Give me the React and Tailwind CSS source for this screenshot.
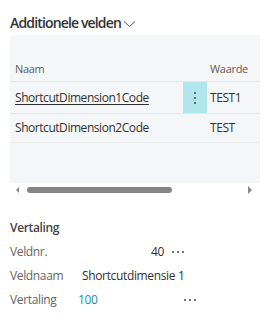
import { ChevronDown } from 'lucide-react';

const FONT = { fontFamily: '"Segoe UI", "Open Sans", "Noto Sans", sans-serif' };

function Dots({ className = '' }) {
  return (
    <span className={`flex items-center gap-[3px] ${className}`}>
      <span className="w-[2px] h-[2px] rounded-full bg-[#444]" />
      <span className="w-[2px] h-[2px] rounded-full bg-[#444]" />
      <span className="w-[2px] h-[2px] rounded-full bg-[#444]" />
    </span>
  );
}

export default function App() {
  return (
    <div className="w-[271px] h-[320px] bg-white text-[#323130] overflow-hidden" style={FONT}>
      {/* Title */}
      <div className="flex items-center pl-[10px] pt-[9px] h-[35px]">
        <span className="text-[14px] font-semibold tracking-[-0.85px] text-[#333]">Additionele velden</span>
        <svg className="w-[13px] h-[8px] ml-[2px] mt-[3px]" viewBox="0 0 13 8" fill="none">
          <path d="M1 1.5 L6.5 6.5 L12 1.5" stroke="#555" strokeWidth="1" />
        </svg>
      </div>

      {/* Table panel */}
      <div className="ml-[10px] w-[250px] bg-[#f5f6f7]">
        <div className="h-[26px]" />
        <div className="flex items-end h-[16px] text-[11px] tracking-[-0.3px] text-[#605e5c]">
          <span className="pl-[5px] w-[200px]">Naam</span>
          <span>Waarde</span>
        </div>
        <div className="h-[1px] bg-[#e6e6e6] mt-[4px]" />
        <div className="flex items-center h-[31px] text-[12px] tracking-[-0.45px]">
          <span className="pl-[5px] w-[173px] underline underline-offset-2">ShortcutDimension1Code</span>
          <span className="w-[24px] h-full bg-[#b0e6ec] flex items-center justify-center">
            <span className="flex flex-col gap-[3px]">
              <span className="w-[2px] h-[2px] rounded-full bg-[#444]" />
              <span className="w-[2px] h-[2px] rounded-full bg-[#444]" />
              <span className="w-[2px] h-[2px] rounded-full bg-[#444]" />
            </span>
          </span>
          <span className="pl-[3px] flex-1">TEST1</span>
        </div>
        <div className="h-[1px] bg-[#e6e6e6]" />
        <div className="flex items-center h-[28px] text-[12px] tracking-[-0.45px]">
          <span className="pl-[5px] w-[200px]">ShortcutDimension2Code</span>
          <span>TEST</span>
        </div>
        <div className="h-[1px] bg-[#ececec]" />
        <div className="h-[40px]" />
      </div>

      {/* Scrollbar */}
      <div className="ml-[10px] w-[250px] h-[13px] flex items-center bg-white">
        <span className="ml-[6px] w-0 h-0 border-y-[3px] border-y-transparent border-r-[3px] border-r-[#888]" />
        <span className="ml-[8px] w-[145px] h-[6px] rounded-full bg-[#858585]" />
        <span className="ml-auto mr-[8px] w-0 h-0 border-y-[4px] border-y-transparent border-l-[4px] border-l-[#888]" />
      </div>

      {/* Vertaling section */}
      <div className="pl-[10px] pt-[24px] text-[12px] tracking-[-0.35px]">
        <div className="font-semibold text-[#444] h-[16px] leading-[16px]">Vertaling</div>
        <div className="flex items-center h-[24px] mt-[4px]">
          <span className="w-[72px] text-[#666]">Veldnr.</span>
          <span className="w-[82px] text-right">40</span>
          <Dots className="ml-[8px]" />
        </div>
        <div className="flex items-center h-[24px]">
          <span className="w-[72px] text-[#666]">Veldnaam</span>
          <span>Shortcutdimensie 1</span>
        </div>
        <div className="flex items-center h-[23px]">
          <span className="w-[68px] text-[#666]">Vertaling</span>
          <span className="text-[#23919b]">100</span>
          <Dots className="ml-[86px]" />
        </div>
      </div>
    </div>
  );
}
